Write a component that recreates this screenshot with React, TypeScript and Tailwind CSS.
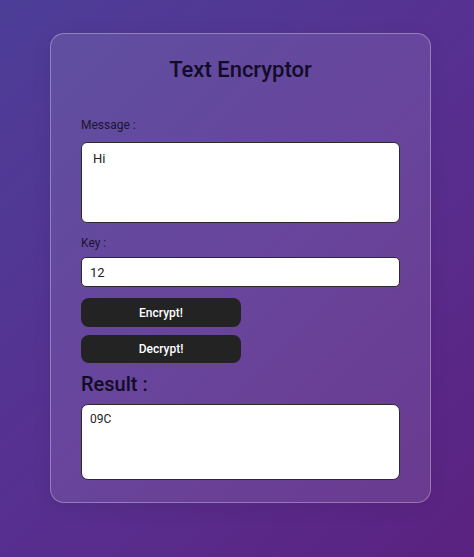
import React, { useState } from "react";

export default function App() {
  const [msg, setMsg] = useState("Hi");
  const [key, setKey] = useState("12");
  const [result, setResult] = useState("09C");
  return (
    <div
      className="min-h-screen w-full flex justify-center pl-[7px] pt-[33px] bg-[linear-gradient(135deg,#4c3e98_0%,#573091_50%,#5b2280_100%)]"
      style={{ fontFamily: "Roboto, 'Liberation Sans', sans-serif" }}
    >
      <div className="w-[381px] h-[470px] rounded-[14px] border border-white/30 bg-white/10 px-[30px] pt-[20px] flex flex-col shadow-[0_4px_20px_rgba(0,0,0,0.08)]">
        <h1 className="text-[22px] leading-[32px] font-medium text-center text-[#120c26]">
          Text Encryptor
        </h1>
        <label className="mt-[31px] text-[12px] leading-[16px] text-[#1c1530]">Message :</label>
        <textarea
          value={msg}
          onChange={(e) => setMsg(e.target.value)}
          className="mt-[9px] h-[81px] w-full resize-none rounded-[6px] border border-[#2b2b2b] bg-white px-[11px] py-[8px] text-[13px] leading-[16px] text-[#222] outline-none"
        />
        <label className="mt-[12px] text-[12px] leading-[16px] text-[#1c1530]">Key :</label>
        <input
          value={key}
          onChange={(e) => setKey(e.target.value)}
          className="mt-[6px] h-[30px] w-full rounded-[5px] border border-[#2b2b2b] bg-white px-[8px] text-[13px] text-[#222] outline-none"
        />
        <button className="mt-[11px] h-[29px] w-[160px] rounded-[8px] bg-[#232323] text-[12px] font-medium text-white">
          Encrypt!
        </button>
        <button className="mt-[8px] h-[28px] w-[160px] rounded-[8px] bg-[#232323] text-[12px] font-medium text-white">
          Decrypt!
        </button>
        <h2 className="mt-[9px] text-[20px] leading-[24px] font-medium text-[#120c26]">Result :</h2>
        <textarea
          value={result}
          onChange={(e) => setResult(e.target.value)}
          className="mt-[8px] h-[76px] w-full resize-none rounded-[7px] border border-[#2b2b2b] bg-white px-[8px] py-[6px] text-[12px] leading-[16px] text-[#222] outline-none"
        />
      </div>
    </div>
  );
}
